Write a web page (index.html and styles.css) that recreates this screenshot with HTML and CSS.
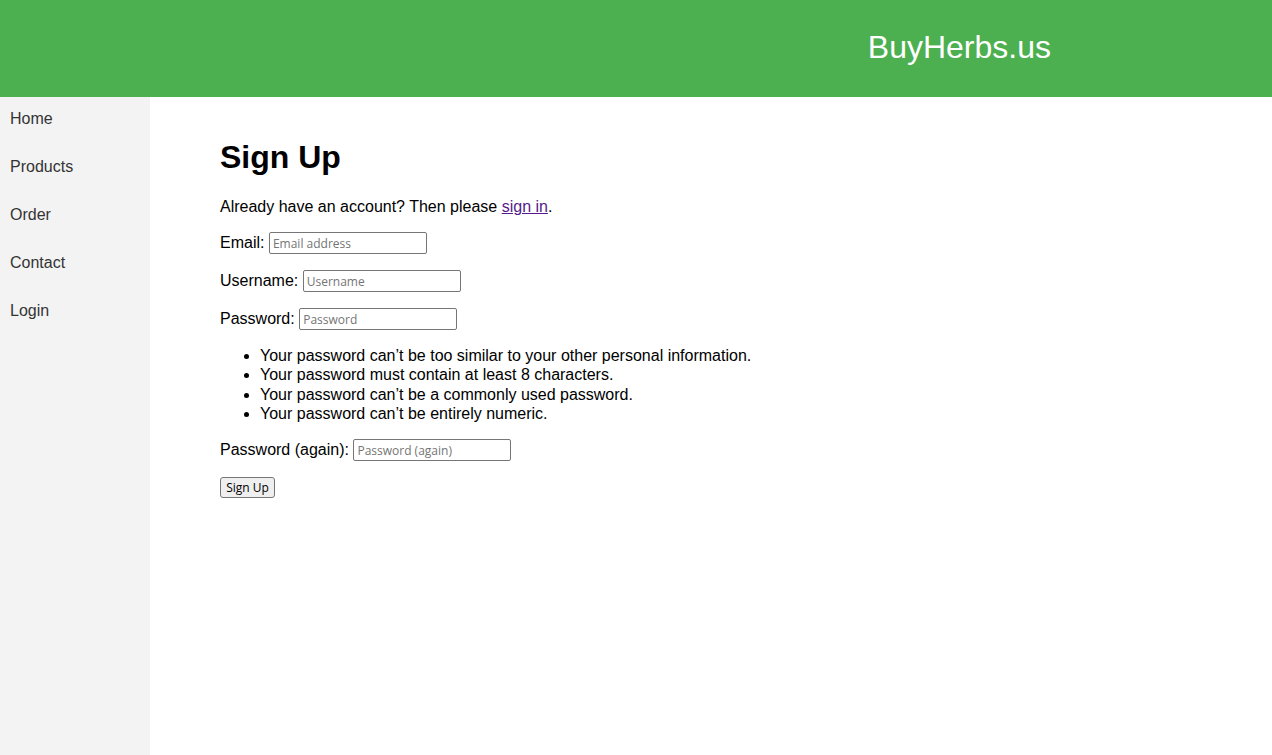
FILE: index.html
```html
<!DOCTYPE html>
<html>
<head>
<meta charset="utf-8">
<title>Sign Up - BuyHerbs.us</title>
<link rel="stylesheet" href="styles.css">
</head>
<body>
<header class="topbar">
  <div class="brand">BuyHerbs.us</div>
</header>
<div class="layout">
  <nav class="sidebar">
    <a class="nav-link" href="#">Home</a>
    <a class="nav-link" href="#">Products</a>
    <a class="nav-link" href="#">Order</a>
    <a class="nav-link" href="#">Contact</a>
    <a class="nav-link" href="#">Login</a>
  </nav>
  <main class="content">
    <h1 class="title">Sign Up</h1>
    <p class="row">Already have an account? Then please <a class="visited" href="#">sign in</a>.</p>
    <form class="signup">
      <p class="row"><label>Email:</label> <input class="field" type="email" placeholder="Email address"></p>
      <p class="row"><label>Username:</label> <input class="field" type="text" placeholder="Username"></p>
      <p class="row"><label>Password:</label> <input class="field" type="password" placeholder="Password"></p>
      <ul class="help">
        <li>Your password can’t be too similar to your other personal information.</li>
        <li>Your password must contain at least 8 characters.</li>
        <li>Your password can’t be a commonly used password.</li>
        <li>Your password can’t be entirely numeric.</li>
      </ul>
      <p class="row"><label>Password (again):</label> <input class="field" type="password" placeholder="Password (again)"></p>
      <p class="row"><button class="btn" type="button">Sign Up</button></p>
    </form>
  </main>
</div>
</body>
</html>
```
FILE: styles.css
```css
html, body {
  margin: 0;
  padding: 0;
}
body {
  font-family: "Liberation Sans", Arial, sans-serif;
  font-size: 16px;
  line-height: 19.2px;
  color: #000;
  background: #fff;
}
.topbar {
  height: 97px;
  box-sizing: border-box;
  padding: 0 221px 2px 0;
  background: #4caf50;
  display: flex;
  align-items: center;
  justify-content: flex-end;
}
.brand {
  color: #fff;
  font-size: 32px;
  line-height: normal;
}
.layout {
  display: flex;
  min-height: calc(100vh - 97px);
}
.sidebar {
  width: 150px;
  flex-shrink: 0;
  background: #f3f3f3;
  display: flex;
  flex-direction: column;
}
.nav-link {
  display: block;
  color: #333;
  text-decoration: none;
  line-height: 18px;
  padding: 13px 10px 17px;
}
.content {
  flex: 1;
  padding: 20px 70px;
}
.title {
  font-size: 32px;
  line-height: normal;
  font-weight: bold;
  margin: 22px 0 21px;
}
.row {
  margin: 16px 0;
}
.visited {
  color: #551a8b;
}
.field {
  box-sizing: border-box;
  width: 158px;
  height: 22px;
  border: 1px solid #767676;
  border-radius: 2px;
  padding: 1px 3px;
  font-family: "Open Sans", sans-serif;
  font-size: 12px;
  vertical-align: baseline;
}
.field::placeholder {
  color: #757575;
}
.help {
  margin: 16px 0;
  padding-left: 40px;
}
.btn {
  box-sizing: border-box;
  width: 55px;
  height: 21px;
  padding: 1px 4px;
  font-family: "Open Sans", sans-serif;
  font-size: 12px;
  line-height: normal;
  background: #efefef;
  border: 1px solid #767676;
  border-radius: 3px;
  color: #000;
}
```
